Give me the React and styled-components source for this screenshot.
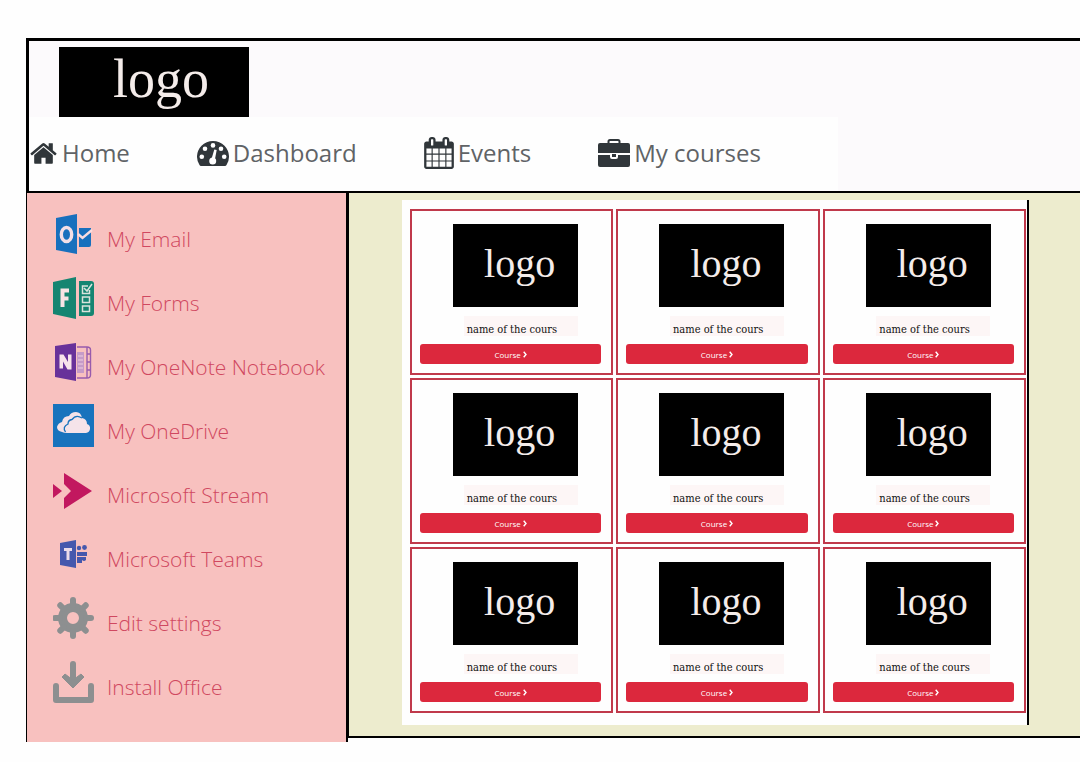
import React from "react";
import styled, { createGlobalStyle } from "styled-components";

const navItems = [
  { label: "Home", icon: HomeIcon },
  { label: "Dashboard", icon: GaugeIcon },
  { label: "Events", icon: CalendarIcon },
  { label: "My courses", icon: BriefcaseIcon },
];

const sideItems = [
  { label: "My Email", icon: OutlookIcon },
  { label: "My Forms", icon: FormsIcon },
  { label: "My OneNote Notebook", icon: OneNoteIcon },
  { label: "My OneDrive", icon: OneDriveIcon },
  { label: "Microsoft Stream", icon: StreamIcon },
  { label: "Microsoft Teams", icon: TeamsIcon },
  { label: "Edit settings", icon: CogIcon },
  { label: "Install Office", icon: InstallIcon },
];

const courses = Array.from({ length: 9 }, (_, id) => ({
  id,
  name: "name of the cours",
}));

function App() {
  return (
    <Page>
      <GlobalStyle />
      <Header>
        <Brand>
          <Logo>logo</Logo>
        </Brand>
        <Nav>
          {navItems.map(({ label, icon: Icon }) => (
            <NavLink href="#" key={label}>
              <Icon />
              {label}
            </NavLink>
          ))}
        </Nav>
      </Header>
      <Body>
        <Sidebar>
          {sideItems.map(({ label, icon: Icon }) => (
            <SideLink href="#" key={label}>
              <Icon />
              <span>{label}</span>
            </SideLink>
          ))}
        </Sidebar>
        <Main>
          <Panel>
            {courses.map((course) => (
              <CourseCard key={course.id} name={course.name} />
            ))}
          </Panel>
        </Main>
      </Body>
    </Page>
  );
}

export default App;

function CourseCard({ name }) {
  return (
    <Card>
      <CourseLogo>logo</CourseLogo>
      <CourseName>{name}</CourseName>
      <CourseButton type="button">
        Course
        <svg width="4" height="7" viewBox="0 0 4 7">
          <path d="M0.7 0.7L3 3.5L0.7 6.3" fill="none" stroke="#fff" strokeWidth="1.4" />
        </svg>
      </CourseButton>
    </Card>
  );
}

function HomeIcon() {
  return (
    <svg width="29" height="29" viewBox="0 0 1792 1792" fill="currentColor">
      <path d="M1472 992v480q0 26-19 45t-45 19h-384v-384h-256v384h-384q-26 0-45-19t-19-45v-480q0-1 .5-3t.5-3l575-474 575 474q1 2 1 6zm223-69l-62 74q-8 9-21 11h-3q-13 0-21-7l-692-577-692 577q-12 8-24 7-13-2-21-11l-62-74q-8-10-7-23.5t11-21.5l719-599q32-26 76-26t76 26l244 204v-195q0-14 9-23t23-9h192q14 0 23 9t9 23v408l219 182q10 8 11 21.5t-7 23.5z" />
    </svg>
  );
}

function GaugeIcon() {
  return (
    <svg width="32" height="32" viewBox="0 0 32 32">
      <path
        d="M16 4A16 15.500 0 0 0 0 20Q0 24 2.500 28Q3 29 4 29H28Q29 29 29.500 28Q32 24 32 20A16 15.500 0 0 0 16 4Z"
        fill="currentColor"
      />
      <g fill="#fff">
        <circle cx="4.800" cy="19.800" r="2.300" />
        <circle cx="8" cy="11.800" r="2.300" />
        <circle cx="16" cy="8.400" r="2.300" />
        <circle cx="24" cy="11.800" r="2.300" />
        <circle cx="27.200" cy="19.800" r="2.300" />
        <circle cx="15.700" cy="24" r="3.500" />
        <path d="M17.300 12.500L19.700 13L17.800 23L14.500 22Z" />
      </g>
    </svg>
  );
}

function CalendarIcon() {
  return (
    <svg width="30" height="32" viewBox="64 0 1664 1792" fill="currentColor">
      <path d="M192 1664h288v-288h-288v288zm352 0h320v-288h-320v288zm-352-352h288v-320h-288v320zm352 0h320v-320h-320v320zm-352-384h288v-288h-288v288zm736 736h320v-288h-320v288zm-384-736h320v-288h-320v288zm768 736h288v-288h-288v288zm-384-352h320v-320h-320v320zm-352-864v-288q0-13-9.500-22.500t-22.500-9.500h-64q-13 0-22.500 9.500t-9.500 22.500v288q0 13 9.500 22.500t22.500 9.500h64q13 0 22.500-9.500t9.500-22.500zm736 864h288v-320h-288v320zm-384-384h320v-288h-320v288zm384 0h288v-288h-288v288zm32-480v-288q0-13-9.500-22.500t-22.500-9.500h-64q-13 0-22.500 9.500t-9.500 22.500v288q0 13 9.500 22.500t22.500 9.500h64q13 0 22.500-9.500t9.500-22.500zm384-64v1280q0 52-38 90t-90 38h-1408q-52 0-90-38t-38-90v-1280q0-52 38-90t90-38h128v-96q0-66 47-113t113-47h64q66 0 113 47t47 113v96h384v-96q0-66 47-113t113-47h64q66 0 113 47t47 113v96h128q52 0 90 38t38 90z" />
    </svg>
  );
}

function BriefcaseIcon() {
  return (
    <svg width="32" height="28" viewBox="0 0 32 28">
      <path d="M10.500 5V2.500Q10.500 1 12 1H20Q21.500 1 21.500 2.500V5" fill="none" stroke="currentColor" strokeWidth="2" />
      <path d="M2 4H30Q32 4 32 6V14H0V6Q0 4 2 4Z" fill="currentColor" />
      <path d="M0 16H12V18Q12 20 14 20H18Q20 20 20 18V16H32V26Q32 28 30 28H2Q0 28 0 26Z" fill="currentColor" />
      <rect x="14" y="15" width="4" height="3" fill="currentColor" />
    </svg>
  );
}

function OutlookIcon() {
  return (
    <svg width="42" height="44" viewBox="0 0 42 44">
      <path d="M3 6L24 2V42L3 38Z" fill="#1870bd" />
      <ellipse cx="13.500" cy="22.500" rx="5.200" ry="7" fill="none" stroke="#f3dfe6" strokeWidth="3.400" />
      <path d="M26 16H38V33Q38 35 36 35H26Z" fill="#1870bd" />
      <path d="M25 22L29.500 26L39 18" fill="none" stroke="#f9dce0" strokeWidth="2.400" />
    </svg>
  );
}

function FormsIcon() {
  return (
    <svg width="42" height="44" viewBox="0 0 42 44">
      <path d="M0 6L23 1V43L0 38Z" fill="#158571" />
      <path d="M7.500 12.500H16V16.500H11.500V20.500H15.500V24.500H11.500V31H7.500Z" fill="#f7e3e4" />
      <path d="M26 5H38Q41 5 41 8V37Q41 40 38 40H26Z" fill="#158571" />
      <g fill="none" stroke="#d9e3dc" strokeWidth="1.500">
        <path d="M36.500 14V17.500H29.500V10H35M31 12L34 15L39 8" />
        <rect x="29.500" y="21" width="7" height="5.500" />
        <rect x="29.500" y="30" width="7" height="5.500" />
      </g>
    </svg>
  );
}

function OneNoteIcon() {
  return (
    <svg width="42" height="44" viewBox="0 0 42 44">
      <path d="M2 6L23 3V41L2 37Z" fill="#68329a" />
      <path d="M6.500 28.500V14.500H10.500L15 22V14.500H18.500V29.500H14.500L10 21.500V28.500Z" fill="#f7e3ea" />
      <path d="M24 7H34Q37.500 7 37.500 10V35Q37.500 38 34 38H24" fill="none" stroke="#985bad" strokeWidth="1.400" />
      <path d="M34 7V38M34 14H38M34 22H38M34 30H38" stroke="#985bad" strokeWidth="1.400" />
      <path d="M24 12H31V33H24Z" fill="#c69bc8" />
      <path d="M25 16H30M25 20H30M25 24H30M25 28H30" stroke="#eed0e0" />
    </svg>
  );
}

function OneDriveIcon() {
  return (
    <svg width="42" height="44" viewBox="0 0 42 44">
      <rect x="0" y="0" width="41" height="43" fill="#1873bd" />
      <path
        d="M9 28Q4 27 4 23Q5 19 9 18Q10 12 16 12Q18 8 23 8Q28 8 29 14Q34 15 34 20Q37.500 21 37 25Q36.500 28.500 33 29H14Q11 29 9 28Z"
        fill="#f5e3e9"
      />
      <path d="M12.500 28Q9 23 15 20Q15 16 19 15.500Q23 10 29 14" fill="none" stroke="#1873bd" strokeWidth="1.300" />
    </svg>
  );
}

function StreamIcon() {
  return (
    <svg width="42" height="44" viewBox="0 0 42 44" fill="#c2185f">
      <path d="M0 16L9 23L0 30Z" />
      <path d="M11 5L39 23L11 41V30L18 23L11 16Z" />
    </svg>
  );
}

function TeamsIcon() {
  return (
    <svg width="42" height="44" viewBox="0 0 42 44" fill="#4558ad">
      <path d="M7 11L23 8V36L7 33Z" />
      <path d="M11 16H19V19H16.500V28H13.500V19H11Z" fill="#eadbe9" />
      <circle cx="26" cy="16" r="2.200" />
      <circle cx="31.500" cy="15.500" r="2.400" />
      <path d="M24 20H34V24H24ZM24 25H33V28Q31 30 29 28V31H24Z" />
    </svg>
  );
}

function CogIcon() {
  return (
    <svg width="42" height="44" viewBox="0 0 42 44" fill="none" stroke="#8d8f90">
      <circle cx="20" cy="22" r="10.500" strokeWidth="9" />
      {[0, 45, 90, 135, 180, 225, 270, 315].map((angle) => (
        <path
          key={angle}
          d="M20 9V4"
          strokeWidth="6"
          strokeLinecap="round"
          transform={`rotate(${angle} 20 22)`}
        />
      ))}
    </svg>
  );
}

function InstallIcon() {
  return (
    <svg width="42" height="44" viewBox="0 0 42 44" fill="none" stroke="#8d8f90">
      <path d="M3 26V40H38V26" strokeWidth="6" strokeLinecap="round" strokeLinejoin="round" />
      <path d="M20 4V18" strokeWidth="6" strokeLinecap="round" />
      <path d="M9 17L12 14L20 20L28 14L31 17L20 28Z" fill="#8d8f90" strokeWidth="1" strokeLinejoin="round" />
    </svg>
  );
}

const GlobalStyle = createGlobalStyle`
  * {
    box-sizing: border-box;
  }
  body {
    margin: 0;
    background-color: #fefefe;
    font-family: "Open Sans", sans-serif;
  }
  a {
    text-decoration: none;
  }
`;

const Page = styled.div`
  padding: 38px 0 20px 26px;
`;

const Header = styled.header`
  background-color: #fcfafc;
  border: solid #000;
  border-width: 3px 0 2px 3px;
`;

const Brand = styled.div`
  padding: 6px 30px 0;
`;

const Logo = styled.div`
  width: 190px;
  height: 70px;
  padding-left: 14px;
  background-color: #000;
  color: #f4ecea;
  font-family: "Liberation Serif", serif;
  font-size: 54px;
  line-height: 64px;
  text-align: center;
`;

const Nav = styled.nav`
  display: flex;
  gap: 67px;
  width: 77%;
  height: 74px;
  background-color: #fefefe;
`;

const NavLink = styled.a`
  display: flex;
  align-items: center;
  gap: 4px;
  color: #606366;
  font-size: 24px;
  line-height: 72px;
  height: 72px;
  white-space: nowrap;

  svg {
    color: #30363a;
  }
`;

const Body = styled.div`
  display: flex;
  align-items: flex-start;
`;

const Sidebar = styled.nav`
  display: flex;
  flex: none;
  flex-direction: column;
  gap: 20px;
  width: 322px;
  padding: 19px 0 38px 26px;
  border: solid #000;
  border-width: 0 2px 0 1px;
  background-color: #f8c1bf;
`;

const SideLink = styled.a`
  display: flex;
  align-items: center;
  gap: 12px;
  height: 44px;
  color: #d04860;
  font-size: 21px;
  font-weight: 300;
  white-space: nowrap;

  span {
    padding-top: 10px;
  }
`;

const Main = styled.main`
  flex: 1;
  padding: 7px 51px 11px 53px;
  border: solid #000;
  border-width: 0 0 2px 1px;
  background-color: #edecce;
`;

const Panel = styled.div`
  display: grid;
  grid-template-columns: repeat(3, 1fr);
  gap: 3px;
  padding: 9px 1px 12px 8px;
  border-right: 2px solid #000;
  background-color: #fefefe;
`;

const Card = styled.article`
  display: flex;
  flex-direction: column;
  align-items: center;
  height: 166px;
  padding: 13px 10px 9px 8px;
  border: 2px solid #c0394b;
`;

const CourseLogo = styled.div`
  width: 125px;
  height: 83px;
  margin-left: 10px;
  padding-left: 8px;
  background-color: #000;
  color: #f4ecea;
  font-family: "Liberation Serif", serif;
  font-size: 40px;
  line-height: 80px;
  text-align: center;
`;

const CourseName = styled.div`
  width: 114px;
  height: 20px;
  margin: 9px 0 8px 20px;
  padding-left: 3px;
  background-color: #fdf6f6;
  color: #111;
  font-family: "DejaVu Serif Condensed", "DejaVu Serif", serif;
  font-size: 11px;
  line-height: 28px;
  white-space: nowrap;
`;

const CourseButton = styled.button`
  display: flex;
  justify-content: center;
  align-items: center;
  gap: 2px;
  width: 100%;
  height: 20px;
  padding: 0;
  border: 0;
  border-radius: 3px;
  background-color: #dc283d;
  color: #fff;
  font-family: "Open Sans", sans-serif;
  font-size: 8px;
  cursor: pointer;
`;
